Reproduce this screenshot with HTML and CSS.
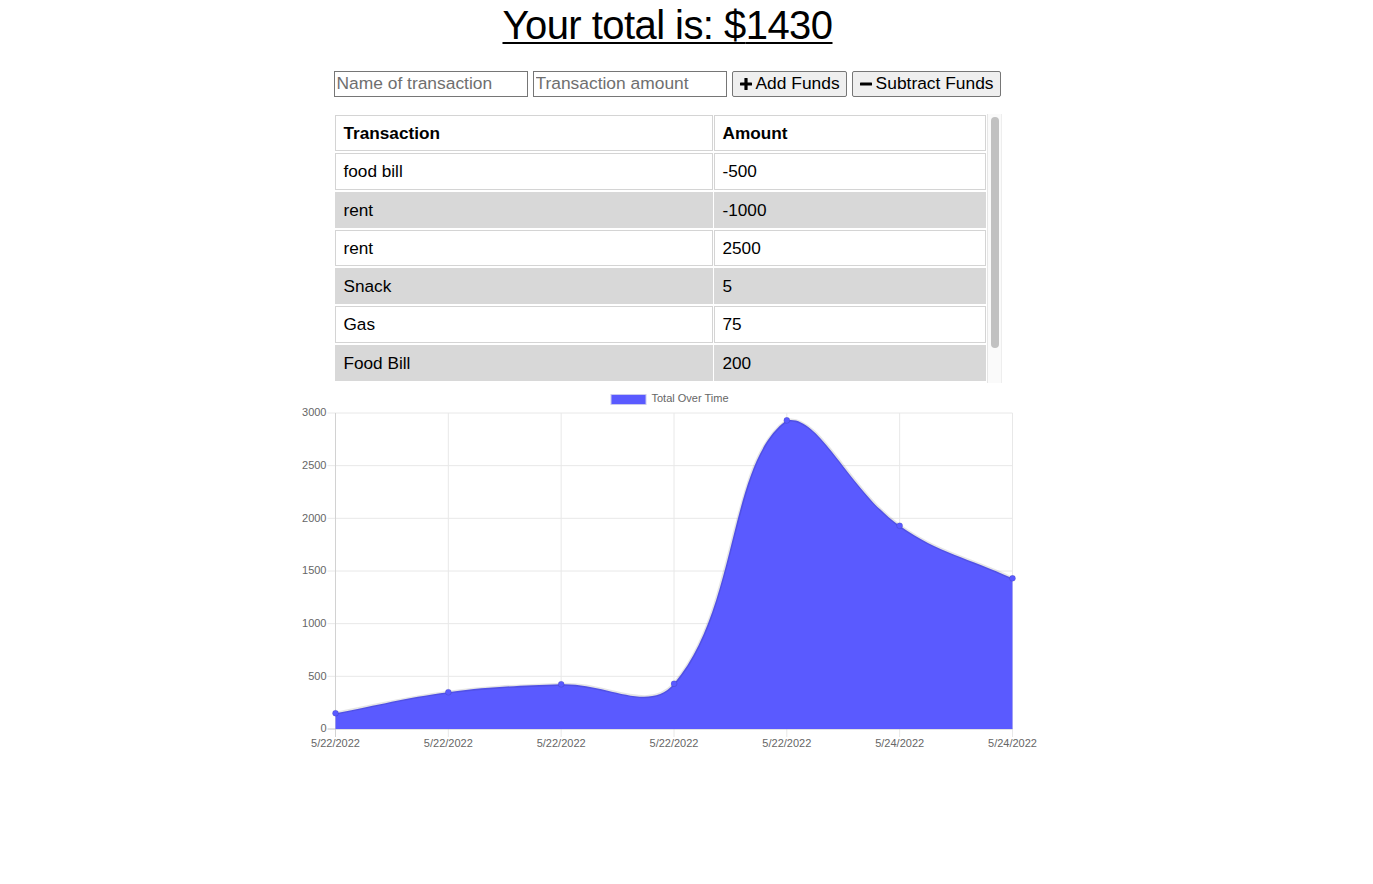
FILE: index.html
```html
<!DOCTYPE html>
<html lang="en">
<head>
<meta charset="utf-8">
<title>Budget Tracker</title>
<link rel="stylesheet" href="styles.css">
</head>
<body>
<div class="page">
  <h1 class="total"><span class="total-text">Your total is: $<span id="total">1430</span></span></h1>

  <div class="form">
    <input class="field" type="text" placeholder="Name of transaction">
    <input class="field" type="number" placeholder="Transaction amount">
    <button class="btn" type="button">
      <svg class="ico" viewBox="0 0 12 12" width="12" height="12" aria-hidden="true"><rect x="4.4" y="0" width="3.2" height="12" rx="0.6"/><rect x="0" y="4.4" width="12" height="3.2" rx="0.6"/></svg>
      <span>Add Funds</span>
    </button>
    <button class="btn" type="button">
      <svg class="ico" viewBox="0 0 12 12" width="12" height="12" aria-hidden="true"><rect x="0" y="4.4" width="12" height="3.2" rx="0.6"/></svg>
      <span>Subtract Funds</span>
    </button>
  </div>

  <div class="table-area">
    <div class="table-wrap">
      <table class="tx">
        <thead>
          <tr><th class="c-name">Transaction</th><th>Amount</th></tr>
        </thead>
        <tbody>
          <tr><td>food bill</td><td>-500</td></tr>
          <tr><td>rent</td><td>-1000</td></tr>
          <tr><td>rent</td><td>2500</td></tr>
          <tr><td>Snack</td><td>5</td></tr>
          <tr><td>Gas</td><td>75</td></tr>
          <tr><td>Food Bill</td><td>200</td></tr>
        </tbody>
      </table>
    </div>
    <div class="scrollbar" aria-hidden="true"><div class="thumb"></div></div>
  </div>

  <svg class="chart" viewBox="287.5 388 760 364" width="760" height="364" aria-label="Total Over Time chart">
    <g class="legend">
      <rect x="610.5" y="393.5" width="35" height="10" class="legend-box"/>
      <text x="651" y="398.5" class="lbl" dominant-baseline="middle">Total Over Time</text>
    </g>
    <g class="grid">
      <line x1="327" y1="412" x2="1012" y2="412"/>
      <line x1="327" y1="464.67" x2="1012" y2="464.67"/>
      <line x1="327" y1="517.33" x2="1012" y2="517.33"/>
      <line x1="327" y1="570" x2="1012" y2="570"/>
      <line x1="327" y1="622.67" x2="1012" y2="622.67"/>
      <line x1="327" y1="675.33" x2="1012" y2="675.33"/>
      <line x1="447.83" y1="412" x2="447.83" y2="736"/>
      <line x1="560.67" y1="412" x2="560.67" y2="736"/>
      <line x1="673.5" y1="412" x2="673.5" y2="736"/>
      <line x1="786.33" y1="412" x2="786.33" y2="736"/>
      <line x1="899.17" y1="412" x2="899.17" y2="736"/>
      <line x1="1012" y1="412" x2="1012" y2="736"/>
    </g>
    <line class="axis-y" x1="335" y1="412" x2="335" y2="736"/>
    <line class="axis-x" x1="327" y1="728" x2="1012" y2="728"/>
    <g class="lbl" text-anchor="end" dominant-baseline="middle">
      <text x="326" y="412.5">3000</text>
      <text x="326" y="465">2500</text>
      <text x="326" y="518">2000</text>
      <text x="326" y="570.5">1500</text>
      <text x="326" y="623">1000</text>
      <text x="326" y="676">500</text>
      <text x="326" y="728.5">0</text>
    </g>
    <g class="lbl" text-anchor="middle" dominant-baseline="middle">
      <text x="335" y="743.5">5/22/2022</text>
      <text x="447.83" y="743.5">5/22/2022</text>
      <text x="560.67" y="743.5">5/22/2022</text>
      <text x="673.5" y="743.5">5/22/2022</text>
      <text x="786.33" y="743.5">5/22/2022</text>
      <text x="899.17" y="743.5">5/24/2022</text>
      <text x="1012" y="743.5">5/24/2022</text>
    </g>
    <path class="area" d="M335,712.2 C380.13,703.77 402.36,696.97 447.83,691.13 C492.63,685.38 515.48,684.92 560.67,683.23 C605.75,681.55 647.99,712.52 673.5,682.7 C738.26,606.98 727.67,460.44 786.33,419.37 C817.94,412 849.21,489.73 899.17,524.71 C939.47,552.93 966.87,556.31 1012,577.37 L1012,728 L335,728 Z"/>
    <path class="line" d="M335,712.2 C380.13,703.77 402.36,696.97 447.83,691.13 C492.63,685.38 515.48,684.92 560.67,683.23 C605.75,681.55 647.99,712.52 673.5,682.7 C738.26,606.98 727.67,460.44 786.33,419.37 C817.94,412 849.21,489.73 899.17,524.71 C939.47,552.93 966.87,556.31 1012,577.37"/>
    <g class="pts">
      <circle cx="335" cy="712.2" r="3"/>
      <circle cx="447.83" cy="691.13" r="3"/>
      <circle cx="560.67" cy="683.23" r="3"/>
      <circle cx="673.5" cy="682.7" r="3"/>
      <circle cx="786.33" cy="419.37" r="3"/>
      <circle cx="899.17" cy="524.71" r="3"/>
      <circle cx="1012" cy="577.37" r="3"/>
    </g>
  </svg>
</div>
</body>
</html>
```

FILE: styles.css
```css
html, body {
  margin: 0;
  padding: 0;
  background: #ffffff;
}

body {
  font-family: "Liberation Sans", Arial, Helvetica, sans-serif;
  color: #000;
}

.page {
  width: 1335px;
  display: flex;
  flex-direction: column;
  align-items: center;
}

.total {
  margin: 0;
  padding-top: 2px;
  font-size: 40px;
  line-height: 46px;
  font-weight: normal;
  letter-spacing: -0.55px;
}

.total-text {
  text-decoration: underline;
  text-decoration-thickness: 2px;
  text-underline-offset: 3px;
}

.form {
  margin-top: 23px;
  width: 668px;
  display: flex;
  gap: 5px;
  height: 26px;
}

.field {
  box-sizing: border-box;
  width: 194px;
  height: 26px;
  margin: 0;
  padding: 0 2px 1px;
  border: 1px solid #767676;
  border-radius: 0;
  font-family: "Liberation Sans", Arial, sans-serif;
  font-size: 17.4px;
  color: #000;
  background: #fff;
  outline: none;
  -moz-appearance: textfield;
}

.field::placeholder {
  color: #6f6f6f;
  opacity: 1;
}

.field::-webkit-outer-spin-button,
.field::-webkit-inner-spin-button {
  -webkit-appearance: none;
  margin: 0;
}

.btn {
  box-sizing: border-box;
  height: 26px;
  margin: 0;
  padding: 0 6px 1px 7px;
  display: flex;
  align-items: center;
  gap: 4px;
  border: 1px solid #767676;
  border-radius: 2px;
  background: #efefef;
  font-family: "Liberation Sans", Arial, sans-serif;
  font-size: 17.4px;
  color: #000;
  white-space: nowrap;
}

.ico {
  display: block;
  fill: #000;
  flex: none;
}

.table-area {
  margin-top: 17px;
  width: 668px;
  height: 269px;
  display: flex;
}

.table-wrap {
  flex: 1;
  height: 269px;
  overflow: hidden;
}

.scrollbar {
  box-sizing: border-box;
  width: 15px;
  height: 269px;
  flex: none;
  background: #fafafa;
  border-left: 1px solid #e6e6e6;
  border-right: 1px solid #eeeeee;
  padding: 3px 2px 0 3px;
}

.thumb {
  height: 231px;
  border-radius: 4px;
  background: #c1c1c1;
}

.tx {
  width: 100%;
  border-collapse: separate;
  border-spacing: 1px 2px;
  margin-top: -1px;
  font-size: 17.2px;
}

.tx th,
.tx td {
  text-align: left;
  padding: 7px 7px 7px 8px;
  line-height: 20.3px;
  border: 1px solid #d4d4d4;
  white-space: nowrap;
}

.tx th {
  font-weight: bold;
}

.c-name {
  width: 361px;
}

.tx tbody tr:nth-child(even) td {
  background: #d8d8d8;
  border-color: #d8d8d8;
}

.chart {
  display: block;
  margin-top: 6px;
  overflow: visible;
}

.chart .lbl,
.chart text {
  font-family: "Liberation Sans", Arial, Helvetica, sans-serif;
  font-size: 11px;
  fill: #666666;
}

.legend-box {
  fill: #5a5aff;
  stroke: #c9c9ee;
  stroke-width: 1;
}

.grid line {
  stroke: #e8e8e8;
  stroke-width: 1;
}

.axis-y {
  stroke: #d2d2d2;
  stroke-width: 1;
}

.axis-x {
  stroke: #c4c4c4;
  stroke-width: 1;
}

.area {
  fill: #5a5aff;
  stroke: none;
}

.line {
  fill: none;
  stroke: rgba(0, 0, 0, 0.1);
  stroke-width: 3;
}

.pts circle {
  fill: #5a5aff;
  stroke: rgba(0, 0, 0, 0.1);
  stroke-width: 1;
}
```
